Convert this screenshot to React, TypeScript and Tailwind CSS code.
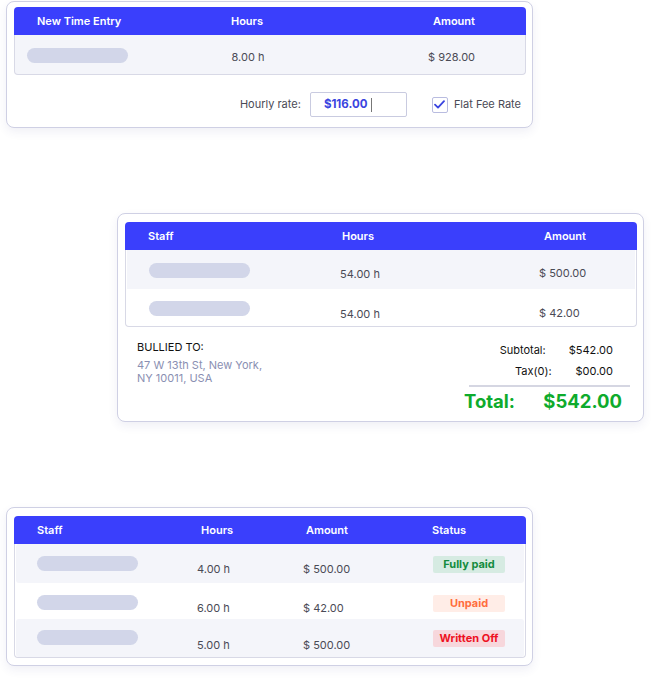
import React from "react";

const Pill = ({ className = "" }: { className?: string }) => (
  <div className={"h-[15px] w-[101px] rounded-full bg-[#d2d6e9] " + className} />
);

const Header = ({ children, cols }: { children: React.ReactNode; cols: string }) => (
  <div className={"grid h-[28px] shrink-0 items-center rounded-t-[4px] bg-[#3a3ffc] text-[11px] font-semibold text-white " + cols}>
    {children}
  </div>
);

export default function App() {
  return (
    <div
      className="flex min-h-[678px] w-[651px] flex-col gap-[85px] bg-white pl-[6px] pt-[1px] text-[11px] text-[#4a4a55]"
      style={{ fontFamily: "Inter, 'Noto Sans', sans-serif" }}
    >
      {/* Card 1 */}
      <div className="h-[127px] w-[527px] shrink-0 rounded-[8px] border border-[#cfd0e4] bg-white pl-[7px] pr-[6px] pt-[5px] shadow-[0_4px_10px_rgba(70,70,140,0.08)]">
        <Header cols="grid-cols-[168px_130px_1fr]">
          <div className="pl-[23px] whitespace-nowrap">New Time Entry</div>
          <div className="text-center">Hours</div>
          <div className="pl-[121px]">Amount</div>
        </Header>
        <div className="grid h-[40px] grid-cols-[168px_130px_1fr] items-start rounded-b-[4px] border-x border-b border-[#d8d9e6] bg-[#f4f5fa]">
          <Pill className="ml-[12px] mt-[13px]" />
          <div className="mt-[15px] text-center leading-[14px]">8.00 h</div>
          <div className="mt-[15px] pl-[115px] leading-[14px] whitespace-nowrap">$ 928.00</div>
        </div>
        <div className="mr-[5px] mt-[17px] flex h-[25px] items-center justify-end">
          <span className="text-[11px] text-[#4a4a55]">Hourly rate:</span>
          <div className="ml-[9px] flex h-[25px] w-[97px] items-center rounded-[2px] border border-[#c9cbe0] pl-[13px]">
            <span className="text-[11.5px] font-bold text-[#3a45e0]">$116.00</span>
            <span className="ml-[4px] h-[14px] w-px bg-[#777]" />
          </div>
          <div className="ml-[25px] flex h-[16px] w-[16px] items-center justify-center rounded-[2px] border border-[#b9bce0] bg-white">
            <svg width="11" height="9" viewBox="0 0 11 9" fill="none">
              <path d="M1 4.6 L4 7.6 L10 1.2" stroke="#3a45e0" strokeWidth="1.8" strokeLinecap="round" strokeLinejoin="round" />
            </svg>
          </div>
          <span className="ml-[6px] text-[11px]">Flat Fee Rate</span>
        </div>
      </div>

      {/* Card 2 */}
      <div className="ml-[111px] h-[209px] w-[527px] shrink-0 rounded-[8px] border border-[#cfd0e4] bg-white pl-[7px] pr-[6px] pt-[8px] shadow-[0_4px_10px_rgba(70,70,140,0.08)]">
        <Header cols="grid-cols-[168px_130px_1fr]">
          <div className="pl-[23px]">Staff</div>
          <div className="text-center">Hours</div>
          <div className="pl-[121px]">Amount</div>
        </Header>
        <div className="rounded-b-[4px] border-x border-b border-[#d8d9e6]">
          <div className="mx-px grid h-[39px] grid-cols-[168px_130px_1fr] items-start bg-[#f4f5fa]">
            <Pill className="ml-[22px] mt-[13px]" />
            <div className="mt-[17px] text-center leading-[14px]">54.00 h</div>
            <div className="mt-[16px] pl-[114px] leading-[14px] whitespace-nowrap">$ 500.00</div>
          </div>
          <div className="mx-px grid h-[37px] grid-cols-[168px_130px_1fr] items-start">
            <Pill className="ml-[22px] mt-[12px]" />
            <div className="mt-[18px] text-center leading-[14px]">54.00 h</div>
            <div className="mt-[17px] pl-[114px] leading-[14px] whitespace-nowrap">$ 42.00</div>
          </div>
        </div>
        <div className="flex items-start justify-between">
          <div className="pl-[12px] pt-[13px]">
            <div className="text-[11px] leading-[14px] text-[#111]">BULLIED TO:</div>
            <div className="mt-[5px] text-[11px] leading-[13px] text-[#8a8fb2]">
              47 W 13th St, New York,
              <br />
              NY 10011, USA
            </div>
          </div>
          <div className="mr-[7px] flex w-[166px] flex-col pt-[16px]">
            <div className="flex justify-end gap-[23px] pr-[17px] text-[11px] leading-[14px] text-[#111]">
              <span>Subtotal:</span>
              <span>$542.00</span>
            </div>
            <div className="mt-[7px] flex justify-end gap-[24px] pr-[17px] text-[11px] leading-[14px] text-[#111]">
              <span>Tax(0):</span>
              <span>$00.00</span>
            </div>
            <div className="ml-[5px] mt-[7px] h-[2px] bg-[#d5d6e2]" />
            <div className="mt-[3px] flex justify-between pr-[8px] text-[18.5px] font-bold leading-[22px] text-[#0eab2c]">
              <span>Total:</span>
              <span>$542.00</span>
            </div>
          </div>
        </div>
      </div>

      {/* Card 3 */}
      <div className="h-[159px] w-[527px] shrink-0 rounded-[8px] border border-[#cfd0e4] bg-white pl-[7px] pr-[6px] pt-[8px] shadow-[0_4px_10px_rgba(70,70,140,0.08)]">
        <Header cols="grid-cols-[182px_106px_130px_1fr]">
          <div className="pl-[23px]">Staff</div>
          <div className="pl-[5px]">Hours</div>
          <div className="pl-[4px]">Amount</div>
          <div>Status</div>
        </Header>
        <div className="rounded-b-[4px] border-x border-b border-[#d8d9e6]">
          {[
            { h: "4.00 h", a: "$ 500.00", s: "Fully paid", bg: "bg-[#f4f5fa]", rh: "h-[39px]", pm: "mt-[12px]", tm: "mt-[18px]", badge: "bg-[#d6ebe2] text-[#138c3e]" },
            { h: "6.00 h", a: "$ 42.00", s: "Unpaid", bg: "bg-white", rh: "h-[36px]", pm: "mt-[12px]", tm: "mt-[18px]", badge: "bg-[#ffede7] text-[#ff6d3e]" },
            { h: "5.00 h", a: "$ 500.00", s: "Written Off", bg: "bg-[#f4f5fa]", rh: "h-[38px]", pm: "mt-[11px]", tm: "mt-[19px]", badge: "bg-[#f7d7dc] text-[#ee1122]" },
          ].map((r, i) => (
            <div key={i} className={"mx-px grid grid-cols-[181px_106px_130px_1fr] items-start rounded-[3px] " + r.bg + " " + r.rh}>
              <Pill className={"ml-[21px] " + r.pm} />
              <div className={"leading-[14px] " + r.tm}>{r.h}</div>
              <div className={"leading-[14px] whitespace-nowrap " + r.tm}>{r.a}</div>
              <div className={"flex h-[17px] w-[72px] items-center justify-center rounded-[2px] text-[11px] font-bold " + r.pm + " " + r.badge}>
                {r.s}
              </div>
            </div>
          ))}
        </div>
      </div>
    </div>
  );
}
